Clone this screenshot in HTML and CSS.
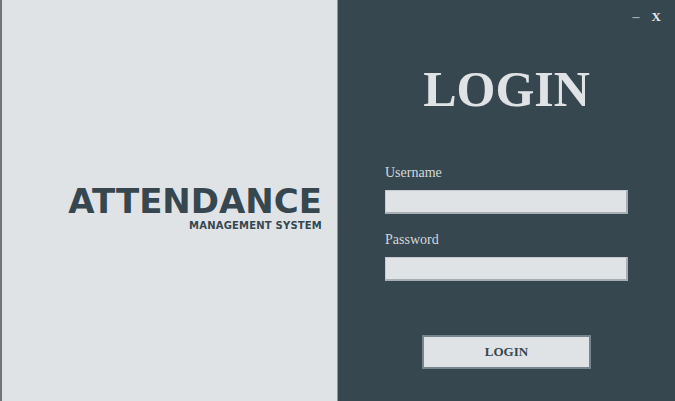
FILE: index.html
```html
<!DOCTYPE html>
<html>
<head>
<meta charset="utf-8">
<link rel="stylesheet" href="styles.css">
</head>
<body>
<div class="app">
  <section class="brand">
    <div class="brand-text">
      <div class="brand-title">ATTENDANCE</div>
      <div class="brand-sub">MANAGEMENT SYSTEM</div>
    </div>
  </section>
  <section class="panel">
    <div class="controls">
      <span class="ctl-min">–</span>
      <span class="ctl-close">X</span>
    </div>
    <h1 class="title">LOGIN</h1>
    <form class="form">
      <label class="label">Username</label>
      <input class="field" type="text">
      <label class="label label-pw">Password</label>
      <input class="field" type="password">
      <div class="btn-row">
        <button type="button" class="btn">LOGIN</button>
      </div>
    </form>
  </section>
</div>
</body>
</html>
```
FILE: styles.css
```css
* { box-sizing: border-box; }
html, body { margin: 0; padding: 0; }
body { width: 675px; height: 401px; overflow: hidden; background: #37474f; }
.app { display: flex; width: 675px; height: 401px; }
.brand {
  width: 338px;
  background: #dfe3e6;
  border-left: 2px solid #6f7477;
  border-right: 1px solid #8d989e;
  display: flex;
  flex-direction: column;
  align-items: flex-end;
  padding-top: 184px;
  padding-right: 15px;
}
.brand-text { display: flex; flex-direction: column; align-items: flex-end; }
.brand-title {
  font-family: "DejaVu Sans", Verdana, sans-serif;
  font-weight: bold;
  font-size: 34px;
  line-height: 34px;
  color: #36474f;
}
.brand-sub {
  font-family: "DejaVu Sans", Verdana, sans-serif;
  font-weight: bold;
  font-size: 10px;
  line-height: 12px;
  color: #36474f;
  letter-spacing: 0.2px;
  margin-top: 2px;
}
.panel {
  flex: 1;
  background: #37474f;
  display: flex;
  flex-direction: column;
  font-family: "Liberation Serif", "Times New Roman", serif;
}
.controls {
  display: flex;
  justify-content: flex-end;
  align-items: baseline;
  gap: 12px;
  padding: 10px 14px 0 0;
  height: 24px;
  font-weight: bold;
  font-size: 13px;
  line-height: 14px;
}
.ctl-min { color: #a3adb3; font-size: 14px; }
.ctl-close { color: #e6eaec; font-size: 13px; }
.title {
  margin: 40px 0 0 0;
  font-size: 50px;
  line-height: 50px;
  font-weight: bold;
  color: #dfe3e6;
  text-align: center;
}
.form {
  display: flex;
  flex-direction: column;
  margin: 51px 0 0 47px;
  width: 243px;
}
.label {
  font-size: 14px;
  line-height: 16px;
  color: #d3d8db;
}
.label-pw { margin-top: 18px; }
.field {
  margin-top: 9px;
  width: 243px;
  height: 24px;
  background: #dfe3e6;
  border: 1px solid #c4cace;
  border-bottom: 2px solid #a7afb4;
  border-right: 2px solid #a7afb4;
  padding: 0;
  outline: none;
}
.btn-row {
  display: flex;
  justify-content: center;
  margin: 54px 0 0 -47px;
  width: 337px;
}
.btn {
  width: 169px;
  height: 34px;
  background: #dfe3e6;
  border: 2px solid #76868f;
  font-family: "Liberation Serif", "Times New Roman", serif;
  font-weight: bold;
  font-size: 13px;
  color: #36474f;
  padding: 0;
}
```
